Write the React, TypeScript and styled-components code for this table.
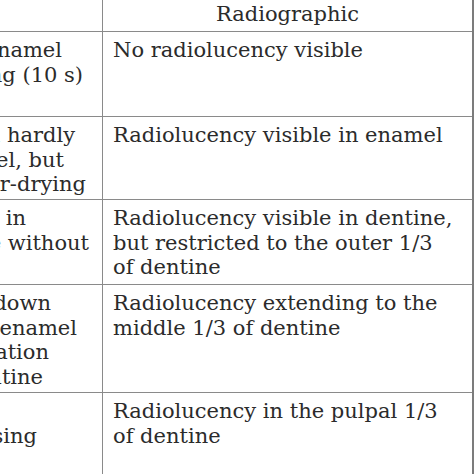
import React from "react";
import styled, { createGlobalStyle } from "styled-components";

interface Line {
	text: string;
	trail: number;
}

interface Row {
	height: number;
	clinical: Line[];
	radiographic: string[];
}

const rows: Row[] = [
	{
		height: 85,
		clinical: [
			{ text: "No or slight change in enamel", trail: 40 },
			{ text: "translucency after air-drying (10 s)", trail: 19 },
		],
		radiographic: ["No radiolucency visible"],
	},
	{
		height: 83,
		clinical: [
			{ text: "Opacity or discoloration hardly", trail: 27 },
			{ text: "visible on the wet enamel, but", trail: 38 },
			{ text: "distinctly visible after air-drying", trail: 16 },
		],
		radiographic: ["Radiolucency visible in enamel"],
	},
	{
		height: 85,
		clinical: [
			{ text: "Opacity or discoloration visible in", trail: 76 },
			{ text: "distinctly visible without", trail: 13 },
		],
		radiographic: [
			"Radiolucency visible in dentine,",
			"but restricted to the outer 1/3",
			"of dentine",
		],
	},
	{
		height: 108,
		clinical: [
			{ text: "Localized enamel breakdown", trail: 51 },
			{ text: "in opaque or discolored enamel", trail: 25 },
			{ text: "and/or greyish discoloration", trail: 53 },
			{ text: "from the underlying dentine", trail: 59 },
		],
		radiographic: [
			"Radiolucency extending to the",
			"middle 1/3 of dentine",
		],
	},
	{
		height: 100,
		clinical: [
			{ text: "Cavitation", trail: 140 },
			{ text: "in enamel exposing", trail: 65 },
		],
		radiographic: ["Radiolucency in the pulpal 1/3", "of dentine"],
	},
];

function App() {
	return (
		<>
			<GlobalStyle />
			<Table>
				<HeaderCell />
				<HeaderCell $title>Radiographic</HeaderCell>
				{rows.map((row, i) => (
					<React.Fragment key={i}>
						<ClinicalCell $height={row.height}>
							{row.clinical.map((line, j) => (
								<ClinicalLine key={j} $trail={line.trail}>
									<span>{line.text}</span>
								</ClinicalLine>
							))}
						</ClinicalCell>
						<RadioCell $height={row.height}>
							{row.radiographic.map((line, j) => (
								<div key={j}>{line}</div>
							))}
						</RadioCell>
					</React.Fragment>
				))}
			</Table>
		</>
	);
}

const GlobalStyle = createGlobalStyle`
	html, body {
		margin: 0;
		padding: 0;
		background: #fff;
		overflow: hidden;
	}
`;

const Table = styled.div`
	width: 472px;
	height: 474px;
	overflow: hidden;
	border-right: 2px solid #7c7c7c;
	display: grid;
	grid-template-columns: 103px 1fr;
	align-content: start;
	font-family: "DejaVu Serif", serif;
	font-size: 21px;
	line-height: 24.5px;
	color: #2b2b2b;
`;

const HeaderCell = styled.div<{ $title?: boolean }>`
	height: 32px;
	box-sizing: border-box;
	border-bottom: 1px solid #8a8a8a;
	border-right: ${(p) => (p.$title ? "none" : "1px solid #8a8a8a")};
	text-align: center;
	padding-top: 2px;
	white-space: nowrap;
`;

const ClinicalCell = styled.div<{ $height: number }>`
	height: ${(p) => p.$height}px;
	box-sizing: border-box;
	border-bottom: 1px solid #8a8a8a;
	border-right: 1px solid #8a8a8a;
	padding-top: 6px;
	overflow: hidden;
`;

const ClinicalLine = styled.div<{ $trail: number }>`
	display: flex;
	justify-content: flex-end;
	padding-right: ${(p) => p.$trail}px;
	white-space: nowrap;
`;

const RadioCell = styled.div<{ $height: number }>`
	height: ${(p) => p.$height}px;
	box-sizing: border-box;
	border-bottom: 1px solid #8a8a8a;
	padding: 6px 8px 0 10px;
	white-space: nowrap;
`;

export default App;
